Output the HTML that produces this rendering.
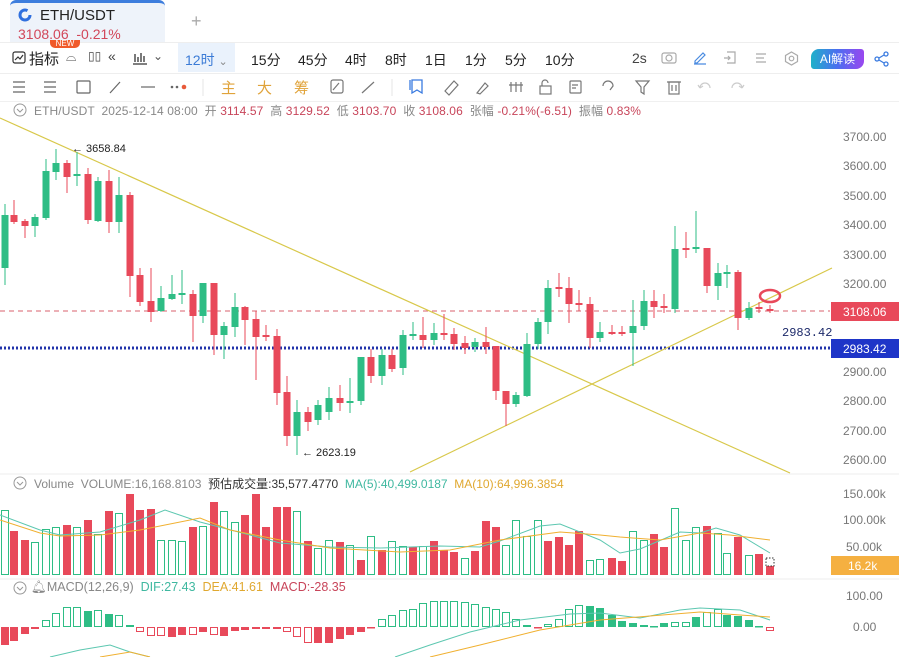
<!DOCTYPE html>
<html><head><meta charset="utf-8"><style>
*{margin:0;padding:0;box-sizing:border-box}
body{width:899px;height:657px;overflow:hidden;background:#fff;font-family:"Liberation Sans","Noto Sans CJK SC",sans-serif;position:relative;color:#222}
.a{position:absolute;white-space:nowrap}
</style></head><body>
<div class="a" style="left:0;top:0;width:899px;height:43px;background:#fff;border-bottom:1px solid #eee"></div>
<div class="a" style="left:10px;top:0;width:155px;height:42px;background:#eef3fa;border-top:3px solid #3d7ddd;border-radius:6px 6px 0 0"></div>
<svg class="a" style="left:18px;top:8px" width="14" height="14" viewBox="0 0 14 14"><circle cx="7" cy="7" r="5" fill="none" stroke="#2f6fde" stroke-width="3" stroke-dasharray="26 6"/></svg>
<div class="a" style="left:40px;top:7px;font-size:15px;color:#222">ETH/USDT</div>
<div class="a" style="left:18px;top:26px;font-size:14px;color:#d2475a">3108.06 &nbsp;-0.21%</div>
<div class="a" style="left:191px;top:11px;font-size:18px;color:#aaa">+</div>
<div class="a" style="left:50px;top:40px;width:30px;height:8px;background:#f05a2a;border-radius:0 0 5px 5px;font-size:8px;color:#fff;text-align:center;line-height:8px">NEW</div>
<svg class="a" style="left:12px;top:51px" width="14" height="13"><rect x="1" y="1" width="12" height="11" rx="2" fill="none" stroke="#333" stroke-width="1.2"/><path d="M3 9l3-3 2 2 3-4" fill="none" stroke="#333" stroke-width="1.2"/></svg>
<div class="a" style="left:29px;top:48px;font-size:15px">指标</div>
<div class="a" style="left:66px;top:49px;font-size:13px;color:#444">⌓</div>
<div class="a" style="left:88px;top:49px;font-size:12px;color:#444">▯▯</div>
<div class="a" style="left:108px;top:48px;font-size:14px;color:#444">«</div>
<svg class="a" style="left:132px;top:50px" width="16" height="16"><path d="M1 14h14M3 12V4M6 12V7M9 12V3M12 12V6" stroke="#333" stroke-width="1.3"/></svg>
<div class="a" style="left:153px;top:49px;font-size:12px;color:#555">⌄</div>
<div class="a" style="left:178px;top:43px;width:57px;height:29px;background:#eaf2fc"></div>
<div class="a" style="left:185px;top:50px;font-size:14px;color:#3b7bd6">12时 <span style="color:#888;font-size:11px">⌄</span></div>
<div class="a" style="left:251px;top:50px;font-size:14px">15分</div>
<div class="a" style="left:298px;top:50px;font-size:14px">45分</div>
<div class="a" style="left:345px;top:50px;font-size:14px">4时</div>
<div class="a" style="left:385px;top:50px;font-size:14px">8时</div>
<div class="a" style="left:425px;top:50px;font-size:14px">1日</div>
<div class="a" style="left:465px;top:50px;font-size:14px">1分</div>
<div class="a" style="left:505px;top:50px;font-size:14px">5分</div>
<div class="a" style="left:545px;top:50px;font-size:14px">10分</div>
<div class="a" style="left:632px;top:50px;font-size:14px;color:#444">2s</div>
<svg class="a" style="left:661px;top:50px" width="16" height="14"><rect x="1" y="3" width="14" height="10" rx="2" fill="none" stroke="#aaa" stroke-width="1.2"/><circle cx="8" cy="8" r="3" fill="none" stroke="#aaa" stroke-width="1.2"/></svg>
<svg class="a" style="left:692px;top:50px" width="16" height="15"><path d="M3 11l8-8 2 2-8 8H3z M2 14h12" fill="none" stroke="#4a8be0" stroke-width="1.2"/></svg>
<svg class="a" style="left:723px;top:50px" width="14" height="15"><path d="M4 2h8v11H4M1 8h6M5 6l2 2-2 2" fill="none" stroke="#aaa" stroke-width="1.2"/></svg>
<svg class="a" style="left:755px;top:52px" width="14" height="12"><path d="M1 2h10M1 6h8M1 10h10" stroke="#aaa" stroke-width="1.2"/></svg>
<svg class="a" style="left:784px;top:51px" width="15" height="15"><path d="M7.5 1l6 3.5v6l-6 3.5-6-3.5v-6z" fill="none" stroke="#aaa" stroke-width="1.2"/><circle cx="7.5" cy="7.5" r="2.3" fill="none" stroke="#aaa" stroke-width="1.2"/></svg>
<div class="a" style="left:811px;top:49px;width:53px;height:20px;border-radius:8px 3px 8px 3px;background:linear-gradient(90deg,#1fb1c9,#4b6ef0,#9a47ef);color:#fff;font-size:12px;text-align:center;line-height:20px">AI解读</div>
<svg class="a" style="left:874px;top:51px" width="16" height="16"><circle cx="12" cy="3" r="2" fill="none" stroke="#3a7be0" stroke-width="1.3"/><circle cx="3" cy="8" r="2" fill="none" stroke="#3a7be0" stroke-width="1.3"/><circle cx="12" cy="13" r="2" fill="none" stroke="#3a7be0" stroke-width="1.3"/><path d="M5 7l5-3M5 9l5 3" stroke="#3a7be0" stroke-width="1.3"/></svg>
<div class="a" style="left:0;top:73px;width:899px;height:1px;background:#eee"></div>
<svg class="a" style="left:0;top:74px" width="899" height="28" font-family="Liberation Sans,Noto Sans CJK SC,sans-serif">
<g stroke="#666" stroke-width="1.2" fill="none">
<path d="M13 8h12M13 13h12M13 18h12"/><path d="M44 8h12M44 13h12M44 18h12"/>
<rect x="77" y="7" width="13" height="12" rx="1"/>
<path d="M110 19l10-11"/><path d="M141 13h14"/>
</g>
<circle cx="172" cy="13" r="1.3" fill="#666"/><circle cx="177" cy="13" r="1.3" fill="#666"/><circle cx="184" cy="13" r="2.3" fill="#e85a3a"/>
<line x1="203" y1="5" x2="203" y2="22" stroke="#e5e5e5"/>
<text x="221" y="19" font-size="15" fill="#e0a33a">主</text>
<text x="257" y="19" font-size="15" fill="#e0a33a">大</text>
<text x="294" y="19" font-size="15" fill="#e0a33a">筹</text>
<g stroke="#777" stroke-width="1.2" fill="none"><rect x="331" y="6" width="12" height="13" rx="2"/><path d="M333 16l6-7"/><path d="M362 19l12-11"/></g>
<line x1="392" y1="5" x2="392" y2="22" stroke="#e5e5e5"/>
<g stroke="#3a7be0" stroke-width="1.3" fill="none"><path d="M412 6h10v13l-5-3-5 3z"/><path d="M410 6v10"/></g>
<g stroke="#777" stroke-width="1.2" fill="none">
<path d="M445 17l9-10 4 4-9 10z"/><path d="M477 19l8-10 3 3-8 8z"/><path d="M511 8v10M516 8v10M521 8v10M509 11h14"/>
<rect x="540" y="12" width="11" height="8"/><path d="M542 12V9a3 3 0 016 0"/>
<rect x="570" y="7" width="11" height="12" rx="1"/><path d="M572 11h6M572 14h4"/>
<path d="M603 12a5 5 0 0110 0l-3 4"/>
<path d="M636 7h13l-5 6v7l-3-2v-5z"/><rect x="669" y="8" width="10" height="12"/><path d="M667 8h14M672 11v6M676 11v6"/>
</g>
<g stroke="#ccc" stroke-width="1.2" fill="none"><path d="M700 14a5 5 0 0110 0M700 14l-2-3M700 14l3-2"/><path d="M742 14a5 5 0 00-10 0M742 14l2-3M742 14l-3-2"/></g>
</svg>
<div class="a" style="left:0;top:101px;width:899px;height:1px;background:#f0f0f0"></div>
<svg class="a" style="left:13px;top:103px" width="14" height="14"><circle cx="7" cy="7" r="6" fill="none" stroke="#999"/><path d="M4 6l3 3 3-3" fill="none" stroke="#999"/></svg>
<div class="a" style="left:34px;top:102px;font-size:12px;color:#888;letter-spacing:0.1px">ETH/USDT &nbsp;2025-12-14 08:00 &nbsp;开 <span style="color:#c8455a">3114.57</span> &nbsp;高 <span style="color:#c8455a">3129.52</span> &nbsp;低 <span style="color:#c8455a">3103.70</span> &nbsp;收 <span style="color:#c8455a">3108.06</span> &nbsp;张幅 <span style="color:#c8455a">-0.21%(-6.51)</span> &nbsp;振幅 <span style="color:#c8455a">0.83%</span></div>

<svg id="ch" class="a" style="left:0;top:0" width="899" height="657" font-family="Liberation Sans,Noto Sans CJK SC,sans-serif"></svg>

<div class="a" style="left:13px;top:476px"><svg width="14" height="14"><circle cx="7" cy="7" r="6" fill="none" stroke="#999"/><path d="M4 6l3 3 3-3" fill="none" stroke="#999"/></svg></div>
<div class="a" style="left:34px;top:475px;font-size:12px;color:#888">Volume &nbsp;VOLUME:16,168.8103 &nbsp;<span style="color:#333">预估成交量:35,577.4770</span> &nbsp;<span style="color:#3fb8a0">MA(5):40,499.0187</span> &nbsp;<span style="color:#e0a830">MA(10):64,996.3854</span></div>
<div class="a" style="left:13px;top:581px"><svg width="14" height="14"><circle cx="7" cy="7" r="6" fill="none" stroke="#999"/><path d="M4 6l3 3 3-3" fill="none" stroke="#999"/></svg></div>
<div class="a" style="left:31px;top:580px;font-size:12.5px;color:#888">🔔︎MACD(12,26,9) &nbsp;<span style="color:#3fb8a0">DIF:27.43</span> &nbsp;<span style="color:#e0a830">DEA:41.61</span> &nbsp;<span style="color:#c8455a">MACD:-28.35</span></div>

<script>
var s='';
var G='#2ebd85',R='#e8495a';
function L(x1,y1,x2,y2,c,w,d){s+='<line x1="'+x1+'" y1="'+y1+'" x2="'+x2+'" y2="'+y2+'" stroke="'+c+'" stroke-width="'+(w||1)+'"'+(d?' stroke-dasharray="'+d+'"':'')+'/>';}
function T(x,y,t,c,f,st){s+='<text x="'+x+'" y="'+y+'" fill="'+c+'" font-size="'+(f||11)+'"'+(st||'')+'>'+t+'</text>';}
L(0,474,899,474,'#eee');L(0,579,899,579,'#eee');
var pl=[[3700,141],[3600,170],[3500,200],[3400,229],[3300,259],[3200,288],[2900,376],[2800,405],[2700,435],[2600,464]];
pl.forEach(function(p){T(843,p[1],p[0]+'.00','#777',12);});
L(0,311,830,311,'#d9606e',1,'5,4');
L(0,348,830,348,'#2233aa',3,'2,2');
L(0,118,790,473,'#d8c84a',1.2);L(410,472,832,268,'#d8c84a',1.2);
var c=[[5,215,268,204,285,1],[14,215,222,200,224,0],[25,221,226,219,238,0],[35,217,226,214,237,1],[46,171,218,159,220,1],[56,163,172,149,180,1],[67,163,177,160,193,0],[77,174,176,152,186,1],[88,174,220,168,224,0],[98,181,221,177,222,1],[109,181,222,170,233,0],[119,195,222,177,233,1],[130,195,276,192,297,0],[140,275,302,268,306,0],[151,301,312,268,322,0],[161,298,311,286,312,1],[172,294,299,275,300,1],[182,293,295,270,304,1],[193,294,316,290,342,0],[203,283,316,283,323,1],[214,283,335,283,355,0],[224,326,335,322,359,1],[235,307,327,293,337,1],[245,307,320,306,345,0],[256,319,337,311,380,0],[266,335,337,325,341,0],[277,336,393,329,405,0],[287,392,436,376,446,0],[297,412,436,400,455,1],[308,412,422,407,431,0],[318,405,420,400,425,1],[329,398,412,387,420,1],[340,398,403,385,411,0],[350,401,403,378,413,1],[361,357,401,357,405,1],[371,357,376,349,383,0],[382,355,376,349,385,1],[392,355,369,349,372,0],[403,335,368,330,375,1],[413,334,336,322,340,1],[423,335,340,317,348,0],[434,333,340,323,345,1],[444,333,334,314,340,0],[454,334,344,328,350,0],[465,343,348,336,354,0],[475,342,347,338,352,1],[486,342,347,327,354,0],[496,346,391,346,400,0],[506,391,404,391,426,0],[516,395,404,392,407,1],[527,344,396,333,397,1],[538,322,344,318,349,1],[548,288,322,280,334,1],[559,287,289,273,297,0],[569,288,304,277,323,0],[579,303,305,290,311,0],[590,304,338,297,348,0],[600,332,338,322,342,1],[612,332,333,325,335,0],[622,332,333,326,336,0],[633,326,333,300,366,1],[644,301,326,290,330,1],[654,301,307,290,318,0],[664,306,308,294,313,0],[675,249,309,226,313,1],[686,248,249,232,258,0],[696,247,249,211,253,1],[707,248,286,248,293,0],[718,273,286,263,300,1],[727,272,274,265,288,1],[738,272,318,270,330,0],[749,308,318,302,320,1],[759,307,309,302,313,0],[770,309,311,305,313,0]];
c.forEach(function(k){var col=k[5]?G:R;L(k[0],k[3],k[0],k[4],col,1);var h=Math.max(2,k[2]-k[1]);s+='<rect x="'+(k[0]-3.5)+'" y="'+k[1]+'" width="7" height="'+h+'" fill="'+col+'"/>';});
T(72,152,'← 3658.84','#222',11);T(302,456,'← 2623.19','#222',11);
s+='<ellipse cx="770" cy="296" rx="10" ry="6" fill="none" stroke="#e8495a" stroke-width="2.5"/>';
T(782,336,'2983.42','#1d2a6a',12,' font-family="Liberation Mono,monospace"');
s+='<rect x="831" y="302" width="68" height="19" fill="#e8495a"/>';T(843,316,'3108.06','#fff',12);
s+='<rect x="831" y="339" width="68" height="19" fill="#1e35c8"/>';T(843,353,'2983.42','#fff',12);
var vt=[510,531,540,542,529,527,525,527,520,534,511,513,494,510,509,540,540,541,527,526,502,511,522,515,494,527,507,507,511,541,548,540,542,545,560,536,550,541,546,547,546,541,550,552,558,551,521,527,545,520,536,520,541,537,545,531,560,559,558,561,531,540,534,547,508,540,527,526,533,553,537,555,554,566];
var vc='grrgggrgrgrgrrrgggrgrggrrrrrgrggrgrgrggrgrrrgrrrggggrrrrggrrggrrgggrggrgrr';
for(var i=0;i<vt.length&&i<c.length;i++){var x=c[i][0];if(vc[i]=='r')s+='<rect x="'+(x-4)+'" y="'+vt[i]+'" width="8" height="'+(575-vt[i])+'" fill="'+R+'"/>';else s+='<rect x="'+(x-3.5)+'" y="'+(vt[i]+.5)+'" width="7" height="'+(574-vt[i])+'" fill="none" stroke="'+G+'"/>';}
s+='<polyline points="0,515 40,530 60,535 100,532 140,520 165,510 200,522 250,535 280,543 330,547 380,548 440,546 480,547 500,541 540,526 560,524 600,540 620,553 640,549 680,532 700,533 716,528 740,535 770,553" fill="none" stroke="#5cc7b0"/>';
s+='<polyline points="0,520 40,533 60,536 100,535 140,530 200,518 230,530 280,540 330,548 400,552 450,550 500,540 560,532 600,535 620,537 660,540 700,533 730,535 770,540" fill="none" stroke="#f0b030"/>';
T(843,498,'150.00k','#777',12);T(843,524,'100.00k','#777',12);T(846,551,'50.00k','#777',12);
s+='<rect x="831" y="556" width="68" height="19" fill="#f5b041"/>';T(848,570,'16.2k','#fff',12);
s+='<rect x="766" y="558" width="8" height="8" fill="none" stroke="#333" stroke-dasharray="1.5,1.5"/>';
var m=[-18,-14,-7,-2,7,14,20,20,16,17,13,12,2,-5,-9,-9,-10,-8,-8,-5,-8,-9,-4,-3,-2,-2,-2,-5,-10,-16,-16,-16,-12,-8,-5,-1,8,12,17,18,24,26,26,26,25,23,20,18,15,8,2,-1,3,8,18,22,21,19,12,6,4,2,1,4,5,5,10,15,18,12,11,7,1,-4,-5,-8];
var z=627;
for(var i=0;i<c.length;i++){var v=m[i],x=c[i][0],col=v>=0?G:R,f=(v>=0?[8,10,12,56,57,58,59,60,61,62,63,66,69,70,71,72].indexOf(i)>=0:[0,1,2,3,16,17,19,21,22,23,24,25,26,30,31,32,33,34,35].indexOf(i)>=0);var y=v>=0?z-v:z,h=Math.max(1.5,Math.abs(v));
if(f)s+='<rect x="'+(x-4)+'" y="'+y+'" width="8" height="'+h+'" fill="'+col+'"/>';else s+='<rect x="'+(x-3.5)+'" y="'+(y+.5)+'" width="7" height="'+(h-1)+'" fill="none" stroke="'+col+'"/>';}
s+='<polyline points="50,657 80,650 110,645 130,652 150,657" fill="none" stroke="#5cc7b0"/>';
s+='<polyline points="100,657 130,652 150,657" fill="none" stroke="#f0b030"/>';
s+='<polyline points="395,657 430,645 470,632 520,620 570,614 600,613 640,618 680,610 700,608 740,610 770,620" fill="none" stroke="#5cc7b0"/>';
s+='<polyline points="430,657 480,645 540,630 600,620 650,616 700,612 740,615 770,617" fill="none" stroke="#f0b030"/>';
T(846,600,'100.00','#777',12);T(853,631,'0.00','#777',12);
document.getElementById('ch').innerHTML=s;
</script>
</body></html>
